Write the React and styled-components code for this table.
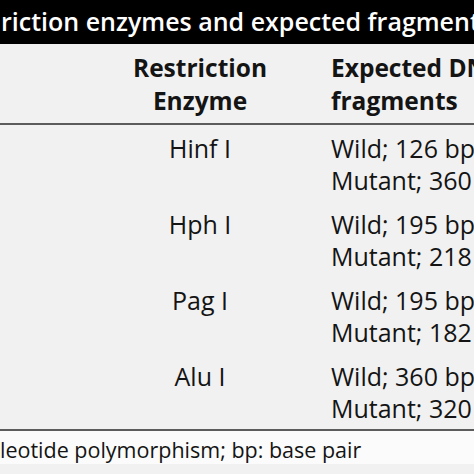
import React from "react";
import styled, { createGlobalStyle } from "styled-components";

const ROWS = [
  { enzyme: "Hinf I", wild: "Wild; 126 bp, 234 bp", mutant: "Mutant; 360 bp" },
  { enzyme: "Hph I", wild: "Wild; 195 bp, 165 bp", mutant: "Mutant; 218 bp, 142 bp" },
  { enzyme: "Pag I", wild: "Wild; 195 bp, 165 bp", mutant: "Mutant; 182 bp, 178 bp" },
  { enzyme: "Alu I", wild: "Wild; 360 bp", mutant: "Mutant; 320 bp, 40 bp" },
];

const GlobalStyle = createGlobalStyle`
  html, body {
    margin: 0;
    padding: 0;
    background: #f0f0f0;
  }
  body {
    font-family: "Open Sans", "Noto Sans", sans-serif;
    color: #141414;
  }
`;

const Frame = styled.div`
  width: 474px;
  height: 474px;
  overflow: hidden;
  display: flex;
  flex-direction: column;
  background: #f1f1f1;
`;

const TitleBar = styled.div`
  height: 44px;
  flex: none;
  background: #000;
  color: #fff;
  font-size: 25px;
  font-weight: 600;
  line-height: 43px;
  padding-left: 1px;
  white-space: nowrap;
  overflow: hidden;
`;

const Grid = styled.div`
  display: grid;
  grid-template-columns: 130px 140px 1fr;
  white-space: nowrap;
`;

const HeadRow = styled(Grid)`
  padding: 7px 0 6px;
  border-bottom: 2px solid #5c5c5c;
  font-weight: 700;
  font-size: 24.5px;
  line-height: 33px;
`;

const BodyRow = styled(Grid)`
  padding: ${(p) => (p.$first ? "7px" : "4px")} 0 ${(p) => (p.$last ? "5px" : "8px")};
  font-size: 25px;
  line-height: 32px;
`;

const Body = styled.div`
  border-bottom: 2px solid #5c5c5c;
`;

const Cell = styled.div`
  text-align: ${(p) => (p.$center ? "center" : "left")};
  padding-left: ${(p) => (p.$indent ? "61px" : "0")};
  overflow: hidden;
`;

const Footer = styled.div`
  background: #fbfbfb;
  height: 33px;
  font-size: 21.5px;
  line-height: 38px;
  white-space: nowrap;
  overflow: hidden;
`;

export default function App() {
  return (
    <Frame>
      <GlobalStyle />
      <TitleBar>riction enzymes and expected fragments</TitleBar>
      <HeadRow>
        <Cell />
        <Cell $center>
          Restriction
          <br />
          Enzyme
        </Cell>
        <Cell $indent>
          Expected DNA
          <br />
          fragments
        </Cell>
      </HeadRow>
      <Body>
        {ROWS.map((row, i) => (
          <BodyRow key={row.enzyme} $first={i === 0} $last={i === ROWS.length - 1}>
            <Cell />
            <Cell $center>{row.enzyme}</Cell>
            <Cell $indent>
              {row.wild}
              <br />
              {row.mutant}
            </Cell>
          </BodyRow>
        ))}
      </Body>
      <Footer>leotide polymorphism; bp: base pair</Footer>
    </Frame>
  );
}
